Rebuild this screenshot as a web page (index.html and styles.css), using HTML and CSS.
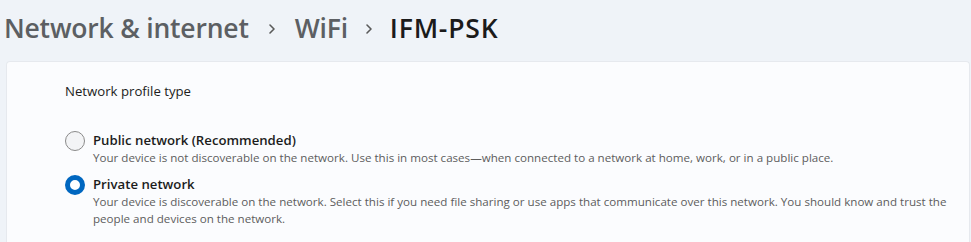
FILE: index.html
```html
<!DOCTYPE html>
<html>
<head>
<meta charset="utf-8">
<link rel="stylesheet" href="styles.css">
</head>
<body>
<div class="page">
  <h1 class="crumbs">
    <span class="crumb">Network &amp; internet</span>
    <span class="chev chev-a"><svg width="10" height="12" viewBox="0 0 10 12"><path d="M3 2 L7 6 L3 10" fill="none" stroke="#5a5a5a" stroke-width="1.6" stroke-linecap="round" stroke-linejoin="round"/></svg></span>
    <span class="crumb">WiFi</span>
    <span class="chev chev-b"><svg width="10" height="12" viewBox="0 0 10 12"><path d="M3 2 L7 6 L3 10" fill="none" stroke="#5a5a5a" stroke-width="1.6" stroke-linecap="round" stroke-linejoin="round"/></svg></span>
    <span class="crumb current">IFM-PSK</span>
  </h1>
  <section class="card">
    <div class="label">Network profile type</div>
    <div class="options">
      <div class="option">
        <span class="radio"></span>
        <div class="text">
          <div class="title">Public network (Recommended)</div>
          <div class="desc">Your device is not discoverable on the network. Use this in most cases—when connected to a network at home, work, or in a public place.</div>
        </div>
      </div>
      <div class="option">
        <span class="radio checked"></span>
        <div class="text">
          <div class="title">Private network</div>
          <div class="desc">Your device is discoverable on the network. Select this if you need file sharing or use apps that communicate over this network. You should know and trust the people and devices on the network.</div>
        </div>
      </div>
    </div>
  </section>
</div>
</body>
</html>
```
FILE: styles.css
```css
html, body {
  margin: 0;
  padding: 0;
  background: #eff3f8;
  font-family: "Open Sans", "Noto Sans", sans-serif;
  overflow: hidden;
}
.page {
  width: 971px;
  height: 242px;
  padding: 0 1px 0 6px;
  box-sizing: border-box;
}
.crumbs {
  margin: 0;
  height: 61px;
  display: flex;
  align-items: center;
  padding: 0 0 6px 0;
  box-sizing: border-box;
  margin-left: -2px;
  font-size: 26.5px;
  font-weight: 600;
  color: #5c5f63;
  letter-spacing: -0.2px;
}
.chev {
  display: inline-flex;
  justify-content: center;
  padding-top: 3px;
}
.chev-a { width: 46px; }
.chev-b { width: 42px; }
.current {
  color: #1b1b1b;
  letter-spacing: 0.8px;
}
.card {
  background: #fbfcfe;
  border: 1px solid #e6e9ee;
  border-bottom: none;
  border-radius: 4px 4px 0 0;
  height: 181px;
  box-sizing: border-box;
  padding: 20px 0 0 58px;
}
.label {
  font-size: 13.2px;
  color: #1c1c1c;
  line-height: 18px;
}
.options {
  margin-top: 31px;
  display: flex;
  flex-direction: column;
  gap: 9px;
}
.option {
  display: flex;
  gap: 8px;
}
.radio {
  width: 20px;
  height: 20px;
  box-sizing: border-box;
  border-radius: 50%;
  border: 1px solid #8a8a8a;
  background: #f3f4f6;
  flex: none;
}
.radio.checked {
  border: 5px solid #0067c0;
  background: #ffffff;
}
.title {
  font-size: 13.2px;
  font-weight: 600;
  color: #1c1c1c;
  line-height: 18px;
}
.desc {
  font-size: 11.6px;
  color: #5d5d5d;
  line-height: 17px;
  max-width: 866px;
}
```
